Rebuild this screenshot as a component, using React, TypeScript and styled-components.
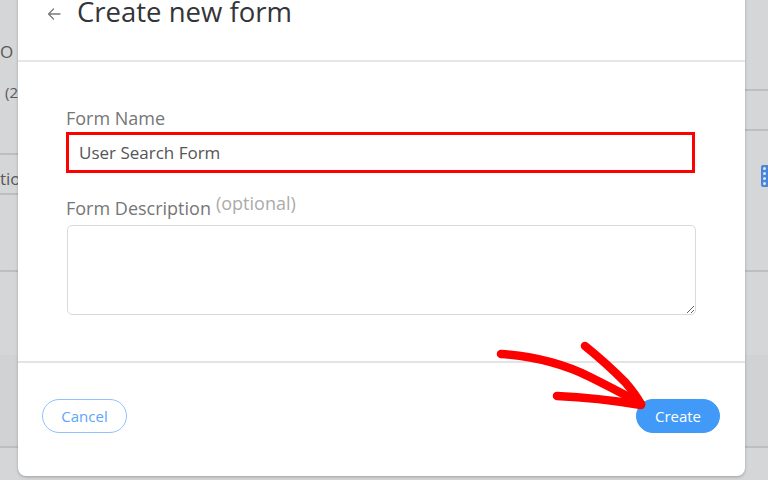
import React from "react";
import styled, { createGlobalStyle } from "styled-components";

const Global = createGlobalStyle`
  html, body { margin: 0; padding: 0; }
  body {
    width: 768px;
    height: 480px;
    overflow: hidden;
    background: #d4d5d7;
    font-family: "Open Sans", "Noto Sans", sans-serif;
  }
  * { box-sizing: border-box; }
`;

const Page = styled.div`
  position: relative;
  width: 768px;
  height: 480px;
  overflow: hidden;
  display: flex;
  justify-content: space-between;
  background: #d4d5d7;
`;

const BackColumn = styled.div<{ $w: number }>`
  width: ${(p) => p.$w}px;
  display: flex;
  flex-direction: column;
`;

const BackCell = styled.div<{ $h: number; $shade?: boolean; $line?: boolean }>`
  height: ${(p) => p.$h}px;
  flex: none;
  background: ${(p) => (p.$shade ? "#d1d2d4" : "#d5d6d8")};
  border-bottom: ${(p) => (p.$line ? "2px solid #bdbec0" : "none")};
  overflow: hidden;
  position: relative;
  color: #58595b;
  white-space: nowrap;
`;

const BackText = styled.div<{ $top: number; $left: number; $size: number }>`
  padding-top: ${(p) => p.$top}px;
  padding-left: ${(p) => p.$left}px;
  font-size: ${(p) => p.$size}px;
  line-height: 1;
`;

const Handle = styled.div`
  margin-top: 34px;
  margin-left: 16px;
  width: 10px;
  height: 22px;
  border-radius: 2px;
  background: #4a86d8;
  display: flex;
  flex-direction: column;
  justify-content: space-evenly;
  padding-left: 2px;
`;

const Dot = styled.span`
  width: 3px;
  height: 3px;
  border-radius: 50%;
  background: #dbe6f6;
`;

const Modal = styled.div`
  position: absolute;
  left: 18px;
  top: -20px;
  width: 727px;
  background: #ffffff;
  border-radius: 8px;
  box-shadow: 0 1px 3px rgba(0, 0, 0, 0.25);
  display: flex;
  flex-direction: column;
`;

const Header = styled.div`
  height: 82px;
  padding: 15px 0 0 29px;
  display: flex;
  align-items: flex-start;
  gap: 16px;
  border-bottom: 2px solid #e6e6e6;
`;

const BackArrow = styled.svg`
  margin-top: 13px;
  flex: none;
`;

const Title = styled.h1`
  margin: 0;
  font-size: 27.5px;
  line-height: 34px;
  font-weight: 400;
  color: #333538;
`;

const Body = styled.div`
  padding: 44px 50px 46px 48px;
  display: flex;
  flex-direction: column;
  border-bottom: 2px solid #e3e3e3;
`;

const Label = styled.label<{ $gap?: number }>`
  display: block;
  font-size: 18px;
  line-height: 24px;
  color: #767676;
  margin-top: ${(p) => p.$gap ?? 0}px;
`;

const Optional = styled.span`
  font-size: 18px;
  line-height: 0;
  color: #ababab;
  vertical-align: 5px;
  margin-left: 5px;
`;

const NameInput = styled.input`
  margin-top: 2px;
  height: 41px;
  width: 100%;
  border: 3px solid #ff0000;
  padding: 0 10px;
  font-family: inherit;
  font-size: 17px;
  color: #555555;
  background: #fff;
  outline: none;
`;

const DescArea = styled.textarea`
  margin-top: 5px;
  width: 629px;
  margin-left: 1px;
  height: 90px;
  border: 1px solid #d9d9d9;
  border-radius: 5px;
  font-family: inherit;
  font-size: 16px;
  outline: none;
  resize: both;
`;

const Footer = styled.div`
  padding: 36px 25px 43px 24px;
  display: flex;
  justify-content: space-between;
  align-items: center;
`;

const Button = styled.button<{ $primary?: boolean }>`
  height: 34px;
  width: ${(p) => (p.$primary ? 84 : 85)}px;
  border-radius: 17px;
  font-family: inherit;
  font-size: 15px;
  cursor: pointer;
  padding: 0;
  border: 1.5px solid ${(p) => (p.$primary ? "#429af8" : "#8fc2ff")};
  background: ${(p) => (p.$primary ? "#429af8" : "#ffffff")};
  color: ${(p) => (p.$primary ? "#ffffff" : "#5ca6fb")};
`;

const Annotation = styled.svg`
  position: absolute;
  left: 0;
  top: 0;
  pointer-events: none;
`;

export default function App() {
  return (
    <>
      <Global />
      <Page>
        <BackColumn $w={18}>
          <BackCell $h={155} $line>
            <BackText $top={43} $left={0} $size={17}>O</BackText>
            <BackText $top={25} $left={5} $size={15}>(25)</BackText>
          </BackCell>
          <BackCell $h={40} $line>
            <BackText $top={15} $left={0} $size={17}>tion</BackText>
          </BackCell>
          <BackCell $h={77} $line />
          <BackCell $h={83} />
          <BackCell $h={93} $shade $line />
          <BackCell $h={32} />
        </BackColumn>
        <BackColumn $w={23}>
          <BackCell $h={91} $line />
          <BackCell $h={40} $line />
          <BackCell $h={141} $line>
            <Handle>
              <Dot />
              <Dot />
              <Dot />
              <Dot />
            </Handle>
          </BackCell>
          <BackCell $h={83} />
          <BackCell $h={93} $shade $line />
          <BackCell $h={32} />
        </BackColumn>

        <Modal>
          <Header>
            <BackArrow width="14" height="12" viewBox="0 0 14 12">
              <path
                d="M13 6H1.5M6.5 1L1.5 6l5 5"
                fill="none"
                stroke="#7a7a7a"
                strokeWidth="1.3"
                strokeLinecap="round"
                strokeLinejoin="round"
              />
            </BackArrow>
            <Title>Create new form</Title>
          </Header>
          <Body>
            <Label htmlFor="fname">Form Name</Label>
            <NameInput id="fname" defaultValue="User Search Form" />
            <Label htmlFor="fdesc" $gap={23}>
              Form Description<Optional>(optional)</Optional>
            </Label>
            <DescArea id="fdesc" />
          </Body>
          <Footer>
            <Button>Cancel</Button>
            <Button $primary>Create</Button>
          </Footer>
        </Modal>

        <Annotation width="768" height="480" viewBox="0 0 768 480">
          <g
            fill="none"
            stroke="#ff0000"
            strokeWidth="8.5"
            strokeLinecap="round"
            strokeLinejoin="round"
          >
            <path d="M501 354 C 530 356, 560 362, 590 377 C 612 388, 628 396, 641 404" />
            <path d="M585 346 C 600 358, 615 372, 625 382 C 632 390, 637 397, 641 404" />
            <path d="M557 396 C 580 397, 605 399, 641 405" />
          </g>
        </Annotation>
      </Page>
    </>
  );
}
